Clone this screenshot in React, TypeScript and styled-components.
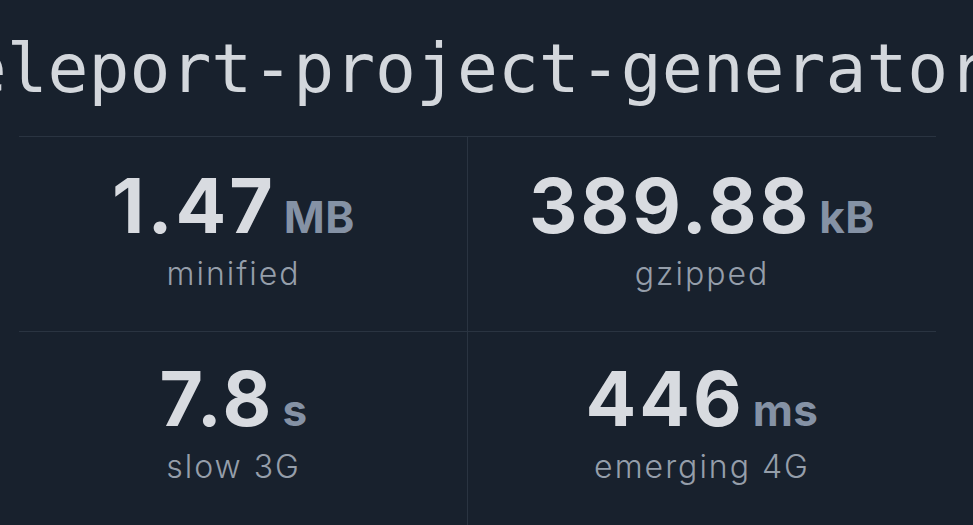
import React from "react";
import styled, { createGlobalStyle } from "styled-components";

const GlobalStyle = createGlobalStyle`
  html, body {
    margin: 0;
    padding: 0;
    background: #18212d;
    overflow: hidden;
  }
  body {
    font-family: Inter, "Noto Sans", sans-serif;
  }
`;

const Page = styled.div`
  width: 973px;
  height: 525px;
  overflow: hidden;
  background: #18212d;
`;

const Header = styled.div`
  width: 936px;
  padding: 29px 22px 0 0;
  box-sizing: border-box;
  display: flex;
  justify-content: center;
  height: 136px;
`;

const Title = styled.h1`
  margin: 0;
  flex: none;
  white-space: nowrap;
  font-family: "DejaVu Sans Mono", "Liberation Mono", monospace;
  font-weight: 400;
  font-size: 68px;
  line-height: normal;
  color: #d3d7dc;
`;

const Grid = styled.div`
  width: 936px;
  display: grid;
  grid-template-columns: 468px 468px;
`;

const Cell = styled.div<{ $left?: boolean }>`
  display: flex;
  flex-direction: column;
  align-items: center;
  height: 195px;
  box-sizing: border-box;
  padding-top: 32px;
  background: linear-gradient(#2a3441, #2a3441) no-repeat
    ${(p) => (p.$left ? "19px" : "0")} 0 / 100% 1px;
  border-right: ${(p) => (p.$left ? "1px solid #2a3441" : "none")};

  &:nth-child(n + 3) {
    padding-top: 30px;
  }
`;

const Value = styled.div`
  display: flex;
  align-items: baseline;
  line-height: 1;
  height: 74px;
`;

const Number = styled.span`
  font-family: Inter, sans-serif;
  font-weight: 700;
  font-size: 75px;
  color: #d8dbe0;
  letter-spacing: 3px;
`;

const Unit = styled.span`
  font-family: Inter, sans-serif;
  font-weight: 700;
  font-size: 44px;
  letter-spacing: 0.5px;
  color: #8592a5;
  margin-left: 8px;
`;

const Label = styled.div`
  margin-top: 13px;
  font-family: Inter, sans-serif;
  font-weight: 300;
  font-size: 32px;
  letter-spacing: 2px;
  line-height: 1.2;
  color: #959eaa;
`;

const stats = [
  { value: "1.47", unit: "MB", label: "minified" },
  { value: "389.88", unit: "kB", label: "gzipped" },
  { value: "7.8", unit: "s", label: "slow 3G" },
  { value: "446", unit: "ms", label: "emerging 4G" },
];

export default function App() {
  return (
    <Page>
      <GlobalStyle />
      <Header>
        <Title>teleport-project-generator</Title>
      </Header>
      <Grid>
        {stats.map((s, i) => (
          <Cell key={s.label} $left={i % 2 === 0}>
            <Value>
              <Number>{s.value}</Number>
              <Unit>{s.unit}</Unit>
            </Value>
            <Label>{s.label}</Label>
          </Cell>
        ))}
      </Grid>
    </Page>
  );
}
